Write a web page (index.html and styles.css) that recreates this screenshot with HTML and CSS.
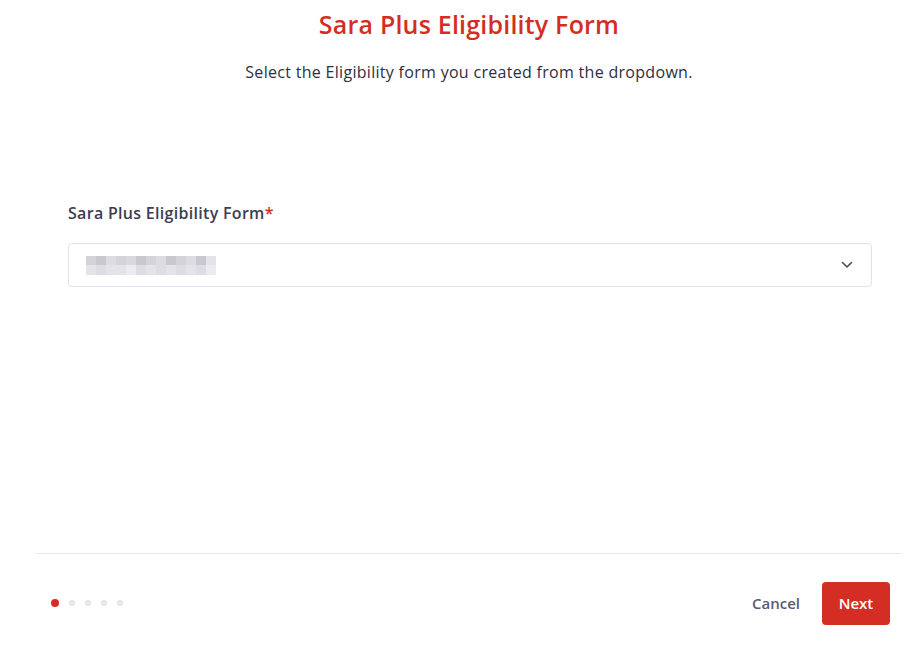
FILE: index.html
```html
<!DOCTYPE html>
<html lang="en">

<head>
    <meta charset="UTF-8">
    <meta name="viewport" content="width=device-width, initial-scale=1.0">
    <title>Sara Plus Eligibility Form</title>
    <link rel="stylesheet" href="styles.css">
</head>

<body>
    <div class="wizard">
        <div class="wizard-header">
            <h2>Sara Plus Eligibility Form</h2>
            <p>Select the Eligibility form you created from the dropdown.</p>
        </div>

        <div class="wizard-body">
            <div class="form-group">
                <label for="eligibilityForm">Sara Plus Eligibility Form<span class="required">*</span></label>
                <div class="select" id="eligibilityForm">
                    <!-- selected value is masked -->
                    <div class="masked">
                        <span class="c1"></span><span class="c2"></span><span class="c3"></span><span class="c1"></span><span class="c4"></span><span class="c2"></span><span class="c1"></span><span class="c3"></span><span class="c2"></span><span class="c1"></span><span class="c3"></span><span class="c2"></span><span class="c5"></span>
                        <span class="c5"></span><span class="c6"></span><span class="c5"></span><span class="c5"></span><span class="c7"></span><span class="c6"></span><span class="c5"></span><span class="c6"></span><span class="c5"></span><span class="c6"></span><span class="c5"></span><span class="c6"></span><span class="c7"></span>
                    </div>
                    <svg class="chevron" width="14" height="14" viewBox="0 0 14 14">
                        <path d="M2.5 4.5 L7 9 L11.5 4.5" fill="none" stroke="#4a4a5a" stroke-width="1.6" stroke-linecap="round" stroke-linejoin="round" />
                    </svg>
                </div>
            </div>
        </div>

        <div class="wizard-footer">
            <div class="steps">
                <span class="dot active"></span>
                <span class="dot"></span>
                <span class="dot"></span>
                <span class="dot"></span>
                <span class="dot"></span>
            </div>
            <div class="actions">
                <button type="button" class="btn-cancel">Cancel</button>
                <button type="button" class="btn-next">Next</button>
            </div>
        </div>
    </div>
</body>

</html>
```

FILE: styles.css
```css
body {
    margin: 0;
    font-family: "Open Sans", Lato, sans-serif;
    background-color: #fff;
    color: #2e2e42;
}

.wizard {
    margin: 0 20px 0 36px;
    height: 656px;
    display: flex;
    flex-direction: column;
}

.wizard-header {
    text-align: center;
    padding-top: 9px;
}

.wizard-header h2 {
    margin: 0;
    font-size: 25px;
    font-weight: 600;
    letter-spacing: 0.2px;
    color: #d42e24;
    line-height: 30px;
}

.wizard-header p {
    margin: 23px 0 0;
    font-size: 16px;
    letter-spacing: 0.3px;
    line-height: 20px;
    color: #2e2e42;
}

.wizard-body {
    flex: 1;
    padding: 121px 30px 0 32px;
    border-bottom: 1px solid #e8e8ec;
}

.form-group label {
    display: block;
    font-size: 16px;
    font-weight: 600;
    letter-spacing: 0.3px;
    color: #3d3d52;
    line-height: 20px;
    margin-bottom: 20px;
}

.required {
    color: #d42e24;
}

.select {
    height: 42px;
    border: 1px solid #e2e2e8;
    border-radius: 4px;
    display: flex;
    align-items: center;
    justify-content: space-between;
    padding: 0 17px 0 17px;
}

.masked {
    display: grid;
    grid-template-columns: repeat(13, 10px);
    grid-auto-rows: 9.5px;
    filter: blur(0.6px);
}

.masked .c1 { background: #d3d3da; }
.masked .c2 { background: #c8c8d0; }
.masked .c3 { background: #dcdce2; }
.masked .c4 { background: #d8d8de; }
.masked .c5 { background: #e3e3e8; }
.masked .c6 { background: #dddde3; }
.masked .c7 { background: #ececf0; }

.chevron {
    display: block;
}

.wizard-footer {
    height: 98px;
    padding: 0 12px 4px 15px;
    display: flex;
    align-items: center;
    justify-content: space-between;
}

.steps {
    display: flex;
    align-items: center;
    gap: 10px;
}

.dot {
    width: 6px;
    height: 6px;
    border-radius: 50%;
    background-color: #e6e6ec;
}

.dot.active {
    width: 8px;
    height: 8px;
    background-color: #d42e24;
}

.actions {
    display: flex;
    align-items: center;
    gap: 22px;
}

.actions button {
    font-family: inherit;
    font-size: 15px;
    font-weight: 600;
    cursor: pointer;
    border: none;
}

.btn-cancel {
    background: none;
    color: #5b5b70;
    padding: 0;
}

.btn-next {
    background-color: #d42e24;
    color: #fff;
    width: 68px;
    height: 43px;
    border-radius: 4px;
}
```
